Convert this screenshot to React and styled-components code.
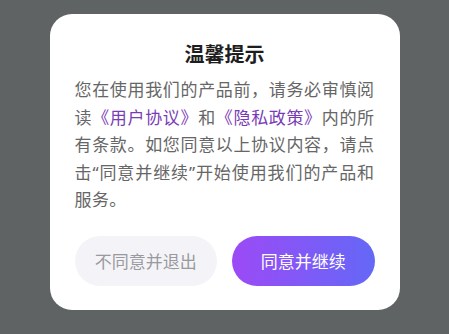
import React from 'react';
import styled, { createGlobalStyle } from 'styled-components';

const GlobalStyle = createGlobalStyle`
  html, body {
    margin: 0;
    padding: 0;
    background: #5f6363;
  }
  body {
    font-family: "Noto Sans", "Noto Sans CJK SC", sans-serif;
  }
`;

const Page = styled.div`
  width: 449px;
  height: 334px;
  display: flex;
  justify-content: center;
  align-items: flex-start;
  padding-top: 14px;
  box-sizing: border-box;
`;

const Card = styled.div`
  width: 350px;
  box-sizing: border-box;
  background: #ffffff;
  border-radius: 22px;
  padding: 27px 25px 24px;
  display: flex;
  flex-direction: column;
`;

const Title = styled.h2`
  margin: 0;
  font-size: 20px;
  line-height: 28px;
  font-weight: 700;
  color: #1e1e1e;
  text-align: center;
`;

const Body = styled.div`
  margin-top: 7px;
  font-size: 17px;
  letter-spacing: 0.4px;
  line-height: 27.5px;
  color: #666666;
`;

const Line = styled.div`
  white-space: nowrap;
  text-align: ${({ last }) => (last ? 'left' : 'justify')};
  text-align-last: ${({ last }) => (last ? 'left' : 'justify')};
`;

const Link = styled.span`
  color: #7a3cb6;
`;

const Actions = styled.div`
  display: flex;
  gap: 15px;
  margin-top: 22px;
`;

const Button = styled.button`
  flex: 1;
  height: 50px;
  border: none;
  border-radius: 25px;
  font-family: "Noto Sans CJK SC", sans-serif;
  font-size: 17px;
  cursor: pointer;
  color: ${({ primary }) => (primary ? '#ffffff' : '#9a9a9e')};
  background: ${({ primary }) => (primary ? 'linear-gradient(90deg, #9c4af6 0%, #6468f6 100%)' : '#f4f4f8')};
`;

export default function App() {
  return (
    <Page>
      <GlobalStyle />
      <Card>
        <Title>温馨提示</Title>
        <Body>
          <Line>您在使用我们的产品前，请务必审慎阅</Line>
          <Line>读<Link>《用户协议》</Link>和<Link>《隐私政策》</Link>内的所</Line>
          <Line>有条款。如您同意以上协议内容，请点</Line>
          <Line>击“同意并继续”开始使用我们的产品和</Line>
          <Line last>服务。</Line>
        </Body>
        <Actions>
          <Button>不同意并退出</Button>
          <Button primary>同意并继续</Button>
        </Actions>
      </Card>
    </Page>
  );
}
